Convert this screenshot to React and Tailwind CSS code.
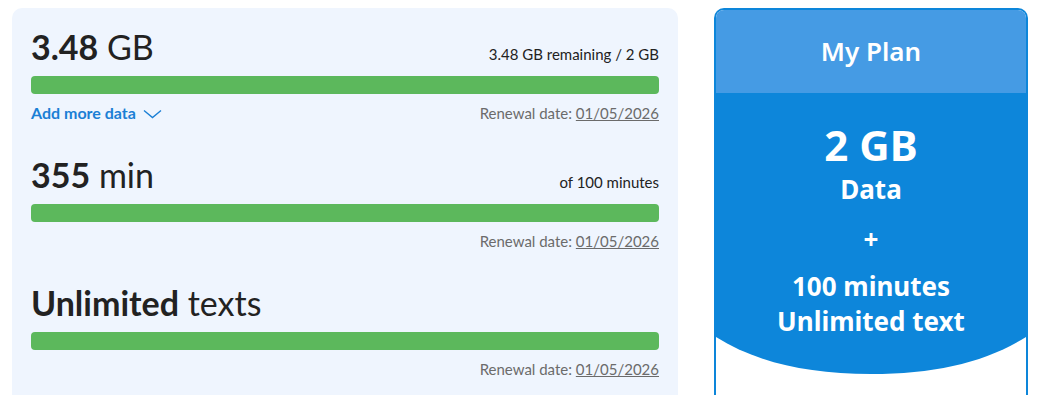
import React from "react";

const usage = [
  { id: "data", strong: "3.48", unit: "GB", note: "3.48 GB remaining / 2 GB", more: true },
  { id: "min", strong: "355", unit: "min", note: "of 100 minutes" },
  { id: "text", strong: "Unlimited", unit: "texts", note: "" },
];

const Chevron = () => (
  <svg width="19" height="10" viewBox="0 0 19 10" className="ml-[7px] mt-[2px]">
    <polyline points="1,1.5 9.5,8.5 18,1.5" fill="none" stroke="#1b7fd5" strokeWidth="1.4" />
  </svg>
);

const UsageRow = ({ item }) => (
  <div>
    <div className="flex items-baseline justify-between h-[40px]">
      <p className="text-[34px] leading-[40px] text-[#222]">
        <span className="font-bold">{item.strong}</span> {item.unit}
      </p>
      <p className="text-[15px] text-[#222]">{item.note}</p>
    </div>
    <div className="mt-[9px] h-[18px] rounded-[4px] bg-[#5cb85c]"></div>
    <div className="mt-[9px] flex items-center justify-between h-[20px] text-[15px] leading-[20px]">
      {item.more ? (
        <button className="flex items-center text-[16px] font-bold text-[#1b7fd5]">
          Add more data
          <Chevron />
        </button>
      ) : (
        <span></span>
      )}
      <p className="text-[#6b6b6b]">
        Renewal date: <span className="underline">01/05/2026</span>
      </p>
    </div>
  </div>
);

const PlanCard = () => (
  <div
    className="w-[314px] border-2 border-b-0 border-[#0d86da] rounded-t-[10px] overflow-hidden text-white text-center"
    style={{ fontFamily: '"Noto Sans", sans-serif' }}
  >
    <div className="h-[83px] bg-[#459be4] flex items-center justify-center">
      <h2 className="text-[26px] font-semibold leading-[32px] -mt-[2px]">My Plan</h2>
    </div>
    <div className="bg-[#0d86da] pt-[28px]">
      <p className="text-[42px] font-bold leading-[48px]">2 GB</p>
      <p className="mt-[4px] text-[26px] font-bold leading-[32px]">Data</p>
      <p className="mt-[18px] text-[26px] font-bold leading-[32px]">+</p>
      <p className="mt-[15px] text-[26px] font-bold leading-[32px]">100 minutes</p>
      <p className="mt-[3px] text-[26px] font-bold leading-[32px]">Unlimited text</p>
    </div>
    <svg viewBox="0 0 310 37" preserveAspectRatio="none" className="block w-full h-[37px]">
      <path d="M0 0 H310 C270 25 220 37 155 37 C90 37 40 25 0 0 Z" fill="#0d86da" />
    </svg>
    <div className="h-[30px] bg-white"></div>
  </div>
);

export default function App() {
  return (
    <div className="bg-white h-[395px] overflow-hidden" style={{ fontFamily: 'Lato, "Noto Sans", sans-serif' }}>
      <div className="flex items-start pt-2 pl-3 gap-[36px]">
        <div className="w-[666px] bg-[#eff5fe] rounded-t-[10px] px-[19px] pt-[19px] pb-[30px] flex flex-col gap-[32px]">
          {usage.map((item) => (
            <UsageRow key={item.id} item={item} />
          ))}
        </div>
        <PlanCard />
      </div>
    </div>
  );
}
